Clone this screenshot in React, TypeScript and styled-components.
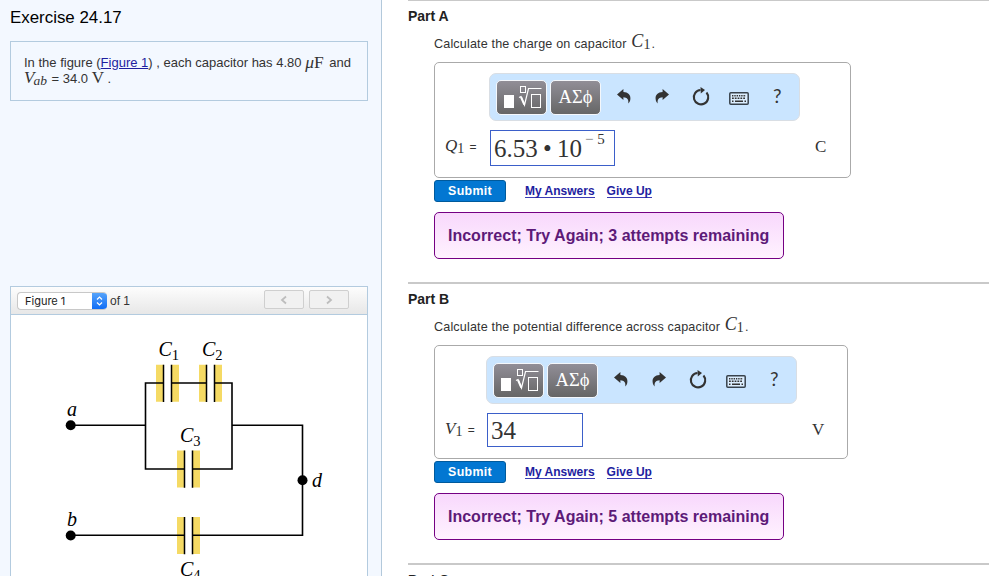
import React from "react";
import styled, { createGlobalStyle } from "styled-components";

const sans = '"Liberation Sans", Arial, sans-serif';
const serif = '"Liberation Serif", "Times New Roman", serif';

const GlobalStyle = createGlobalStyle`
  * { box-sizing: border-box; }
  html, body { margin: 0; background: #fff; overflow: hidden; }
  body { font-family: ${sans}; color: #333; }
`;

const Page = styled.div`
  display: flex;
  width: 989px;
  height: 576px;
  overflow: hidden;
`;

const Sidebar = styled.aside`
  display: flex;
  flex-direction: column;
  width: 382px;
  flex: none;
  padding: 0 13px 0 10px;
  background: #f3f8ff;
  border-right: 1px solid #b3c9db;
`;

const ExerciseTitle = styled.h1`
  margin: 6px 0 0;
  height: 35px;
  font-size: 16.9px;
  line-height: 23px;
  font-weight: 400;
  color: #000;
`;

const Problem = styled.div`
  height: 60px;
  flex: none;
  padding: 13px 0 0 13px;
  border: 1px solid #b3cbdf;
  font-size: 13px;
  line-height: 16px;
  white-space: nowrap;
`;

const ProblemLine = styled.div`
  height: 16px;
`;

const FigureLink = styled.a`
  color: #1e1ea0;
  text-decoration: underline;
`;

const MathText = styled.span<{ $size: number; $italic?: boolean; $raise?: number; $gap?: string }>`
  display: inline-block;
  font-family: ${serif};
  font-size: ${(p) => p.$size}px;
  font-style: ${(p) => (p.$italic ? "italic" : "normal")};
  line-height: 1px;
  margin: ${(p) => p.$gap ?? "0"};
  vertical-align: ${(p) => p.$raise ?? 0}px;
`;

const Figure = styled.section`
  display: flex;
  flex-direction: column;
  height: 290px;
  flex: none;
  margin-top: 185px;
  border: 1px solid #b3cbdf;
  border-bottom: 0;
  background: #fff;
`;

const FigureBar = styled.div`
  display: flex;
  align-items: center;
  height: 28px;
  flex: none;
  padding: 0 18px 0 6px;
  background: linear-gradient(#fdfdfd, #e7e7e7);
  border-bottom: 1px solid #b3cbdf;
`;

const Select = styled.div`
  display: flex;
  width: 90px;
  height: 18px;
  border: 1px solid #c8c8c8;
  border-right: 0;
  border-radius: 4px;
  background: #fff;
  overflow: hidden;
  color: #222;
  font: 11px/17px Inter, ${sans};
`;

const SelectValue = styled.span`
  flex: 1;
  padding-left: 7px;
`;

const Stepper = styled.span`
  display: grid;
  place-items: center;
  width: 15px;
  margin: -1px 0;
  background: linear-gradient(#5aa7fb, #0a69f6);
`;

const Count = styled.span`
  margin-left: 3px;
  font-size: 12px;
`;

const Pager = styled.div`
  display: flex;
  gap: 5px;
  margin-left: auto;
  margin-top: -2px;
`;

const PageButton = styled.button`
  display: grid;
  place-items: center;
  width: 40px;
  height: 19px;
  padding: 0;
  border: 1px solid #cfcfcf;
  border-radius: 2px;
  background: #f1f1f1;
`;

const Main = styled.main`
  flex: none;
  width: 607px;
  padding-left: 26px;
  margin-top: -1px;
`;

const Part = styled.section`
  display: flex;
  flex-direction: column;
  align-items: flex-start;
  padding: 0 0 23px 26px;
  border-top: 2px solid #c9c9c9;
`;

const PartTitle = styled.h2`
  margin: 7px 0 0 -26px;
  height: 26px;
  font-size: 14px;
  line-height: 17px;
  color: #222;
`;

const Prompt = styled.p`
  margin: 0;
  height: 28px;
  font-size: 12.6px;
  letter-spacing: 0.15px;
  line-height: 21px;
  white-space: nowrap;
`;

const AnswerBox = styled.div<{ $w: number; $h: number; $indent: number }>`
  width: ${(p) => p.$w}px;
  height: ${(p) => p.$h}px;
  padding: 10px 0 0 ${(p) => p.$indent}px;
  border: 1px solid #aaa;
  border-radius: 5px;
`;

const Toolbar = styled.div`
  display: flex;
  align-items: flex-start;
  width: 311px;
  height: 48px;
  padding: 6px 0 0 6px;
  border: 1px solid #d9dee4;
  border-radius: 7px;
  background: #cae5ff;
`;

const PaletteButton = styled.button`
  display: grid;
  place-items: center;
  width: 51px;
  height: 35px;
  flex: none;
  margin-right: 3px;
  padding: 0 0 2px;
  border: 1px solid #f4f7fb;
  border-radius: 5px;
  background: linear-gradient(#918e97, #666);
  color: #fff;
  font: 18.5px/28px ${serif};
`;

const ToolIcons = styled.div`
  display: flex;
  height: 34px;
  align-items: center;
  padding-left: 1px;
`;

const ToolButton = styled.button`
  display: grid;
  place-items: center;
  width: 38.3px;
  height: 34px;
  padding: 0;
  border: 0;
  background: none;
  color: #333;
  flex: none;
`;

const Help = styled(ToolButton)`
  font: 19px/32px Lato, ${sans};
  padding-bottom: 2px;
`;

const AnswerRow = styled.div<{ $indent: number; $top: number }>`
  display: flex;
  margin: ${(p) => p.$top}px 0 0 ${(p) => -p.$indent}px;
`;

const Variable = styled.div<{ $w: number; $top: number }>`
  width: ${(p) => p.$w}px;
  flex: none;
  padding: ${(p) => p.$top}px 0 0 10px;
  font-size: 12px;
  line-height: 16px;
  white-space: nowrap;
`;

const Field = styled.div<{ $w: number; $h: number }>`
  width: ${(p) => p.$w}px;
  height: ${(p) => p.$h}px;
  flex: none;
  padding-left: 3px;
  border: 1px solid #3b5fc9;
  font: 25px/${(p) => p.$h - 1}px ${serif};
  white-space: nowrap;
  word-spacing: -1px;
`;

const Exponent = styled.span`
  display: inline-block;
  margin-left: 3px;
  font-size: 15px;
  line-height: 1px;
  vertical-align: 13px;
  word-spacing: 0;
`;

const Minus = styled.span`
  color: #777;
`;

const Unit = styled.div<{ $top: number }>`
  width: 12px;
  margin: ${(p) => p.$top}px 23px 0 auto;
  font: 17px/16px ${serif};
`;

const Actions = styled.div`
  display: flex;
  height: 22px;
  margin-top: 2px;
  font-size: 12px;
  font-weight: 700;
`;

const Submit = styled.button`
  width: 72px;
  height: 22px;
  padding: 0;
  margin-right: 19px;
  border: 1px solid #005a9c;
  border-radius: 3px;
  background: #0277d2;
  color: #fff;
  font: 700 12.4px/19px ${sans};
  letter-spacing: 0.3px;
`;

const ActionLink = styled.a`
  height: 17px;
  margin: 1px 12px 0 0;
  line-height: 20px;
  color: #1e1ea0;
  border-bottom: 1px solid #3a3ab5;
`;

const Feedback = styled.div`
  width: 350px;
  height: 47px;
  margin-top: 10px;
  padding-left: 13px;
  border: 1px solid #750083;
  border-radius: 5px;
  background: linear-gradient(#f8d8fc, #fff2ff);
  color: #5d1a78;
  font-size: 16px;
  line-height: 45px;
  font-weight: 700;
  white-space: nowrap;
`;

const Label = styled.text`
  font: italic 20px ${serif};
  fill: #000;
`;

const Capacitor = ({ x, y }: { x: number; y: number }) => (
  <g>
    <path d={`M${x} ${y}h8v37h-8zM${x + 15.5} ${y}h7.5v37h-7.5z`} fill="#f5da64" />
    <path d={`M${x + 7.5} ${y}v37.3M${x + 15.5} ${y}v37.3`} stroke="#000" strokeWidth="1.5" />
  </g>
);

const CapLabel = ({ x, y, n }: { x: number; y: number; n: number }) => (
  <Label x={x} y={y}>
    C<tspan fontSize="14.5" fontStyle="normal" dy="4">{n}</tspan>
  </Label>
);

const Circuit = () => (
  <svg width="356" height="261" viewBox="11 315 356 261">
    <Capacitor x={156} y={364.8} />
    <Capacitor x={199} y={364.8} />
    <Capacitor x={177} y={450.5} />
    <Capacitor x={177} y={517} />
    <path
      d="M71 425.2H145.5M163.5 383H145.5V469H184.5M171.5 383H206.5M214.5 383H232V469H192.5M232 425.2H302.5V535.3H192.5M184.5 535.3H71"
      fill="none"
      stroke="#000"
      strokeWidth="1.6"
    />
    <circle cx="70.7" cy="425.2" r="5" />
    <circle cx="70.7" cy="535.5" r="5" />
    <circle cx="302.5" cy="480.3" r="5" />
    <CapLabel x={158.5} y={355.5} n={1} />
    <CapLabel x={202} y={355.5} n={2} />
    <CapLabel x={180} y={441.5} n={3} />
    <CapLabel x={180} y={575.5} n={4} />
    <Label x="67" y="416">a</Label>
    <Label x="67" y="526.4">b</Label>
    <Label x="312" y="486.5">d</Label>
  </svg>
);

const RootIcon = () => (
  <svg width="40" height="24" viewBox="0 0 40 24" fill="none" stroke="#fff">
    <rect x="2" y="10" width="10" height="13" fill="#fff" stroke="none" />
    <rect x="18.5" y="1.5" width="5" height="6" />
    <path d="M17 12.500l2-1 3.500 8.500 4-16.500H39.500" strokeWidth="1.200" />
    <path d="M19 12l3.300 7.500" strokeWidth="2" />
    <rect x="29.500" y="9.500" width="9" height="13" />
  </svg>
);

const UndoIcon = ({ flip }: { flip?: boolean }) => (
  <svg width="14" height="16" viewBox="0 0 14 16">
    <path
      transform={flip ? "translate(14 0) scale(-1 1)" : undefined}
      d="M0 5.500L6.400 0V3.100C11 3.300 13.700 6 13.400 9.700C13.300 11.700 12.500 13.200 11.300 14.400C11.800 10.500 10.300 8.300 6.400 8.200V11Z"
      fill="#333"
    />
  </svg>
);

const ResetIcon = () => (
  <svg width="18" height="20" viewBox="0 0 18 20">
    <path d="M8.500 3A7.200 7.200 0 1 0 14.500 5.500" fill="none" stroke="#333" strokeWidth="2.100" />
    <path d="M8.500 0L13 3L8.800 6.400Z" fill="#333" />
  </svg>
);

const KeyboardIcon = () => (
  <svg width="20" height="15" viewBox="0 -2 20 15">
    <rect x="0.800" y="0.800" width="18.400" height="11.400" rx="1" fill="#dceeff" stroke="#38424c" strokeWidth="1.500" />
    <path d="M3 3.700H17" stroke="#333" strokeWidth="1.500" strokeDasharray="1.400 0.900" />
    <path d="M3 6.300H17" stroke="#333" strokeWidth="1.500" strokeDasharray="1.800 1" />
    <path d="M3 9.300H4.500M6 9.300H14M15.500 9.300H17" stroke="#333" strokeWidth="1.400" />
  </svg>
);

const Chevron = ({ right }: { right?: boolean }) => (
  <svg width="8" height="10" viewBox="0 0 8 10">
    <path d={right ? "M2 1.500L6 5L2 8.500" : "M6 1.500L2 5L6 8.500"} fill="none" stroke="#bdbdbd" strokeWidth="1.800" />
  </svg>
);

const CapacitorName = () => (
  <>
    <MathText $size={18} $italic $raise={1.5} $gap="0 0 0 1px">C</MathText>
    <MathText $size={14} $raise={-1} $gap="0 1px 0 0">1</MathText>.
  </>
);

interface PartProps {
  title: string;
  quantity: string;
  symbol: string;
  unit: string;
  width: number;
  height: number;
  indent: number;
  fieldWidth: number;
  fieldHeight: number;
  attempts: number;
  children: React.ReactNode;
}

const QuestionPart = (p: PartProps) => (
  <Part>
    <PartTitle>{p.title}</PartTitle>
    <Prompt>
      <span>Calculate the {p.quantity} capacitor </span>
      <CapacitorName />
    </Prompt>
    <AnswerBox $w={p.width} $h={p.height} $indent={p.indent}>
      <Toolbar>
        <PaletteButton><RootIcon /></PaletteButton>
        <PaletteButton>ΑΣϕ</PaletteButton>
        <ToolIcons>
          <ToolButton><UndoIcon /></ToolButton>
          <ToolButton><UndoIcon flip /></ToolButton>
          <ToolButton><ResetIcon /></ToolButton>
          <ToolButton><KeyboardIcon /></ToolButton>
          <Help>?</Help>
        </ToolIcons>
      </Toolbar>
      <AnswerRow $indent={p.indent} $top={9}>
        <Variable $w={p.indent + 1} $top={9}>
          <MathText $size={17} $italic $raise={0}>{p.symbol}</MathText>
          <MathText $size={14} $raise={-2} $gap="0 2px 0 0">1</MathText> =
        </Variable>
        <Field $w={p.fieldWidth} $h={p.fieldHeight}>{p.children}</Field>
        <Unit $top={9}>{p.unit}</Unit>
      </AnswerRow>
    </AnswerBox>
    <Actions>
      <Submit>Submit</Submit>
      <ActionLink>My Answers</ActionLink>
      <ActionLink>Give Up</ActionLink>
    </Actions>
    <Feedback>Incorrect; Try Again; {p.attempts} attempts remaining</Feedback>
  </Part>
);

export default function App() {
  return (
    <Page>
      <GlobalStyle />
      <Sidebar>
        <ExerciseTitle>Exercise 24.17</ExerciseTitle>
        <Problem>
          <ProblemLine>
            In the figure (<FigureLink>Figure 1</FigureLink>) , each capacitor has 4.80{" "}
            <MathText $size={17.5} $italic $raise={-1}>μ</MathText>
            <MathText $size={17.5} $raise={-1} $gap="0 2px 0 0">F</MathText> and
          </ProblemLine>
          <ProblemLine>
            <MathText $size={17} $italic>V</MathText>
            <MathText $size={13.5} $italic $raise={-2} $gap="0 1px 0 -1px">ab</MathText> = 34.0{" "}
            <MathText $size={17}>V</MathText> .
          </ProblemLine>
        </Problem>
        <Figure>
          <FigureBar>
            <Select>
              <SelectValue>Figure 1</SelectValue>
              <Stepper>
                <svg width="7" height="10" viewBox="0 0 7 10" fill="none" stroke="#fff" strokeWidth="1.200">
                  <path d="M1 3.500L3.500 1L6 3.500M1 6.500L3.500 9L6 6.500" />
                </svg>
              </Stepper>
            </Select>
            <Count>of 1</Count>
            <Pager>
              <PageButton><Chevron /></PageButton>
              <PageButton><Chevron right /></PageButton>
            </Pager>
          </FigureBar>
          <Circuit />
        </Figure>
      </Sidebar>
      <Main>
        <QuestionPart
          title="Part A" quantity="charge on" symbol="Q" unit="C"
          width={417} height={116} indent={54} fieldWidth={125} fieldHeight={36} attempts={3}
        >
          6.53 • 10<Exponent><Minus>−</Minus> 5</Exponent>
        </QuestionPart>
        <QuestionPart
          title="Part B" quantity="potential difference across" symbol="V" unit="V"
          width={414} height={114} indent={51} fieldWidth={96} fieldHeight={34} attempts={5}
        >
          34
        </QuestionPart>
        <Part>
          <PartTitle>Part C</PartTitle>
        </Part>
      </Main>
    </Page>
  );
}
